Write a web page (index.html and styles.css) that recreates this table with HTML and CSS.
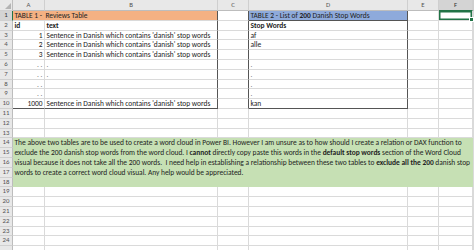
FILE: index.html
```html
<!DOCTYPE html>
<html>
<head>
<meta charset="utf-8">
<link rel="stylesheet" href="styles.css">
</head>
<body>
<div class="sheet">
  <div class="row hdr">
    <div class="c rh corner"><svg width="12" height="10" viewBox="0 0 12 10"><polygon points="11,3 11,9 5,9" fill="#b4b4b4"/></svg></div>
    <div class="c ch a">A</div>
    <div class="c ch b">B</div>
    <div class="c ch cc">C</div>
    <div class="c ch d">D</div>
    <div class="c ch e">E</div>
    <div class="c ch f selh">F</div>
    <div class="c ch g"></div>
  </div>
  <div class="row">
    <div class="c rh selh">1</div>
    <div class="c ab orange">TABLE 1 -&nbsp; Reviews Table</div>
    <div class="c cc tl"></div>
    <div class="c d blue tr">TABLE 2 - List of <b>200</b> Danish Stop Words</div>
    <div class="c e"></div>
    <div class="c f sel"><span class="handle"></span></div>
    <div class="c g"></div>
  </div>
  <div class="row">
    <div class="c rh">2</div>
    <div class="c a"><b>id</b></div>
    <div class="c b tl"><b>text</b></div>
    <div class="c cc tl"></div>
    <div class="c d tr"><b>Stop Words</b></div>
    <div class="c e"></div><div class="c f"></div><div class="c g"></div>
  </div>
  <div class="row">
    <div class="c rh">3</div>
    <div class="c a num">1</div>
    <div class="c b tl">Sentence in Danish which contains 'danish' stop words</div>
    <div class="c cc tl"></div>
    <div class="c d tr">af</div>
    <div class="c e"></div><div class="c f"></div><div class="c g"></div>
  </div>
  <div class="row">
    <div class="c rh">4</div>
    <div class="c a num">2</div>
    <div class="c b tl">Sentence in Danish which contains 'danish' stop words</div>
    <div class="c cc tl"></div>
    <div class="c d tr">alle</div>
    <div class="c e"></div><div class="c f"></div><div class="c g"></div>
  </div>
  <div class="row">
    <div class="c rh">5</div>
    <div class="c a num">3</div>
    <div class="c b tl">Sentence in Danish which contains 'danish' stop words</div>
    <div class="c cc tl"></div>
    <div class="c d tr"></div>
    <div class="c e"></div><div class="c f"></div><div class="c g"></div>
  </div>
  <div class="row">
    <div class="c rh">6</div>
    <div class="c a num dots">. .</div>
    <div class="c b tl dots">.</div>
    <div class="c cc tl"></div>
    <div class="c d tr dots">.</div>
    <div class="c e"></div><div class="c f"></div><div class="c g"></div>
  </div>
  <div class="row">
    <div class="c rh">7</div>
    <div class="c a num dots">. .</div>
    <div class="c b tl dots">.</div>
    <div class="c cc tl"></div>
    <div class="c d tr dots">.</div>
    <div class="c e"></div><div class="c f"></div><div class="c g"></div>
  </div>
  <div class="row">
    <div class="c rh">8</div>
    <div class="c a num dots">. .</div>
    <div class="c b tl"></div>
    <div class="c cc tl"></div>
    <div class="c d tr dots">.</div>
    <div class="c e"></div><div class="c f"></div><div class="c g"></div>
  </div>
  <div class="row">
    <div class="c rh">9</div>
    <div class="c a num dots">. .</div>
    <div class="c b tl"></div>
    <div class="c cc tl"></div>
    <div class="c d tr dots">.</div>
    <div class="c e"></div><div class="c f"></div><div class="c g"></div>
  </div>
  <div class="row">
    <div class="c rh">10</div>
    <div class="c a num bb">1000</div>
    <div class="c b tl bb">Sentence in Danish which contains 'danish' stop words</div>
    <div class="c cc tl"></div>
    <div class="c d tr bb">kan</div>
    <div class="c e"></div><div class="c f"></div><div class="c g"></div>
  </div>
  <div class="row"><div class="c rh">11</div><div class="c a"></div><div class="c b"></div><div class="c cc"></div><div class="c d"></div><div class="c e"></div><div class="c f"></div><div class="c g"></div></div>
  <div class="row"><div class="c rh">12</div><div class="c a"></div><div class="c b"></div><div class="c cc"></div><div class="c d"></div><div class="c e"></div><div class="c f"></div><div class="c g"></div></div>
  <div class="row"><div class="c rh">13</div><div class="c a"></div><div class="c b"></div><div class="c cc"></div><div class="c d"></div><div class="c e"></div><div class="c f"></div><div class="c g"></div></div>
  <div class="row"><div class="c rh">14</div><div class="c note">The above two tables are to be used to create a word cloud in Power BI. However I am unsure as to how should I create a relation or DAX function to</div><div class="c g"></div></div>
  <div class="row"><div class="c rh">15</div><div class="c note">exclude the 200 danish stop words from the word cloud. I <b>cannot</b> directly copy paste this words in the <b>default stop words</b> section of the Word Cloud</div><div class="c g"></div></div>
  <div class="row"><div class="c rh">16</div><div class="c note">visual because it does not take all the 200 words.&nbsp; I need help in establishing a relationship between these two tables to <b>exclude all the 200</b> danish stop</div><div class="c g"></div></div>
  <div class="row"><div class="c rh">17</div><div class="c note">words to create a correct word cloud visual. Any help would be appreciated.</div><div class="c g"></div></div>
  <div class="row"><div class="c rh">18</div><div class="c note"></div><div class="c g"></div></div>
  <div class="row"><div class="c rh">19</div><div class="c a"></div><div class="c b"></div><div class="c cc"></div><div class="c d"></div><div class="c e"></div><div class="c f"></div><div class="c g"></div></div>
  <div class="row"><div class="c rh">20</div><div class="c a"></div><div class="c b"></div><div class="c cc"></div><div class="c d"></div><div class="c e"></div><div class="c f"></div><div class="c g"></div></div>
  <div class="row"><div class="c rh">21</div><div class="c a"></div><div class="c b"></div><div class="c cc"></div><div class="c d"></div><div class="c e"></div><div class="c f"></div><div class="c g"></div></div>
  <div class="row"><div class="c rh">22</div><div class="c a"></div><div class="c b"></div><div class="c cc"></div><div class="c d"></div><div class="c e"></div><div class="c f"></div><div class="c g"></div></div>
  <div class="row"><div class="c rh">23</div><div class="c a"></div><div class="c b"></div><div class="c cc"></div><div class="c d"></div><div class="c e"></div><div class="c f"></div><div class="c g"></div></div>
  <div class="row"><div class="c rh">24</div><div class="c a"></div><div class="c b"></div><div class="c cc"></div><div class="c d"></div><div class="c e"></div><div class="c f"></div><div class="c g"></div></div>
  <div class="row"><div class="c rh"></div><div class="c a"></div><div class="c b"></div><div class="c cc"></div><div class="c d"></div><div class="c e"></div><div class="c f"></div><div class="c g"></div></div>
</div>
</body>
</html>
```
FILE: styles.css
```css
html, body {
  margin: 0;
  padding: 0;
  background: #ffffff;
  overflow: hidden;
}
body {
  font-family: Carlito, Calibri, Lato, "Liberation Sans", sans-serif;
  font-size: 7.45px;
  color: #222222;
  width: 474px;
  height: 250px;
}
.sheet {
  display: flex;
  flex-direction: column;
  width: 474px;
}
.row {
  display: flex;
  height: 9.8px;
  flex: none;
}
.row.hdr {
  height: 11px;
}
.c {
  box-sizing: border-box;
  flex: none;
  height: 100%;
  border-right: 1px solid #dadada;
  border-bottom: 1px solid #dadada;
  white-space: nowrap;
  line-height: 9.4px;
  padding: 0 1.5px;
  overflow: visible;
  position: relative;
}
.c b {
  font-weight: 700;
}
.rh {
  width: 13px;
  background: #e8e8e8;
  border-right-color: #bdbdbd;
  border-bottom-color: #d0d0d0;
  color: #555555;
  text-align: center;
  font-size: 6.8px;
  padding: 0;
}
.corner {
  padding: 0;
  line-height: 0;
}
.corner svg {
  display: block;
}
.ch {
  background: #e8e8e8;
  border-right-color: #cfcfcf;
  border-bottom-color: #bdbdbd;
  color: #555555;
  text-align: center;
  font-size: 6.8px;
  line-height: 11px;
}
.selh {
  background: #d4d4d4;
  color: #333333;
}
.ch.selh {
  border-bottom: 1px solid #217346;
}
.rh.selh {
  border-right: 1px solid #217346;
}
.a { width: 32px; }
.b { width: 173px; }
.ab { width: 205px; }
.cc { width: 31px; }
.d { width: 159px; }
.e { width: 31px; }
.f { width: 34px; }
.g { flex: 1; padding: 0; }
.num { text-align: right; }
.dots { color: #777777; }
.orange {
  background: #f4b183;
  border-right-color: #555555;
}
.blue {
  background: #8eaadb;
  border-bottom-color: #555555;
}
.tl { border-right-color: #555555; }
.tr { border-right-color: #555555; }
.bb { border-bottom-color: #555555; }
.note {
  width: 460px;
  background: #c6e0b4;
  border-right: none;
  border-bottom: none;
}
.sel {
  box-shadow: inset 0 0 0 1.5px #217346;
}
.handle {
  position: absolute;
  right: -2px;
  bottom: -2px;
  width: 3px;
  height: 3px;
  background: #217346;
  border: 1px solid #ffffff;
  z-index: 2;
}
```
